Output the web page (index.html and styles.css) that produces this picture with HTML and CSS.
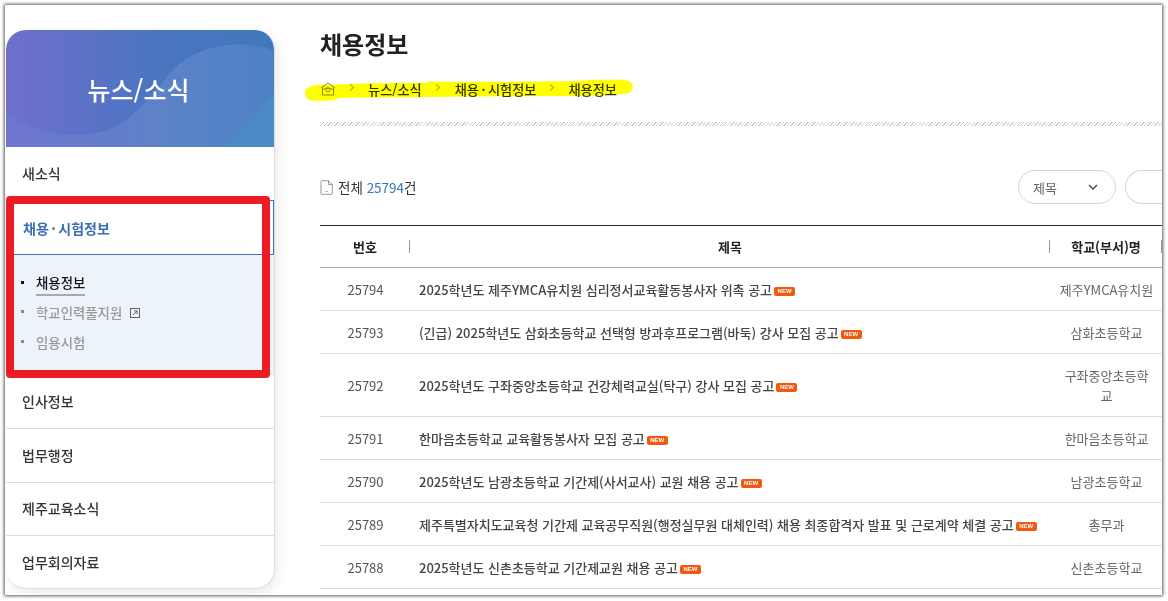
FILE: index.html
```html
<!DOCTYPE html>
<html lang="ko">
<head>
<meta charset="utf-8">
<title>채용정보</title>
<link rel="stylesheet" href="styles.css">
</head>
<body>
<div class="frame">
  <aside class="side">
    <div class="side-head">
      <svg class="wave" viewBox="0 0 268 117" preserveAspectRatio="none" aria-hidden="true">
        <defs>
          <linearGradient id="g1" x1="0" x2="1" y1="0" y2="0"><stop offset="0" stop-color="#6f6fcd"/><stop offset=".55" stop-color="#4b75c2"/><stop offset="1" stop-color="#4178bb"/></linearGradient>
          <linearGradient id="g2" x1="0" x2="1" y1="0" y2="0"><stop offset="0" stop-color="#6e75cd"/><stop offset=".55" stop-color="#5e82c8"/><stop offset="1" stop-color="#4c82c4"/></linearGradient>
        </defs>
        <rect width="268" height="117" fill="url(#g1)"/>
        <path d="M0 82C30 104 60 107 85 104C120 100 140 72 165 42C190 16 225 8 268 20V117H0Z" fill="url(#g2)"/>
        <path d="M215 117C235 105 255 82 268 62V117Z" fill="#4c8ac6"/>
      </svg>
      <h2 class="side-title">뉴스/소식</h2>
    </div>
    <nav>
      <a class="nav-item first">새소식</a>
      <a class="nav-item active">채용<span class="dot">·</span>시험정보</a>
      <ul class="sub">
        <li class="on"><span>채용정보</span></li>
        <li><span>학교인력풀지원</span>
          <svg class="ext" viewBox="0 0 11 11" aria-hidden="true"><rect x=".5" y=".5" width="10" height="10" fill="none" stroke="#555"/><path d="M3.2 7.8 7.6 3.4M4.4 3.2H7.8V6.6" fill="none" stroke="#555"/></svg>
        </li>
        <li><span>임용시험</span></li>
      </ul>
      <a class="nav-item line">인사정보</a>
      <a class="nav-item line">법무행정</a>
      <a class="nav-item line short">제주교육소식</a>
      <a class="nav-item">업무회의자료</a>
    </nav>
  </aside>

  <main class="main">
    <h1 class="page-title">채용정보</h1>
    <div class="crumbs">
      <svg class="home" viewBox="0 0 16 14" aria-hidden="true"><path d="M1 6 8 1l7 5M2.5 5.5V13h11V5.5" fill="none" stroke="#8c8c50"/><circle cx="8" cy="8" r="2" fill="none" stroke="#8c8c50"/><path d="M3 8c2-2.600 8-2.600 10 0" fill="none" stroke="#8c8c50"/></svg>
      <i class="sep"></i><span>뉴스/소식</span>
      <i class="sep wide"></i><span>채용<span class="dot">·</span>시험정보</span>
      <i class="sep"></i><span>채용정보</span>
    </div>
    <div class="hatch"></div>
    <div class="toolbar">
      <div class="count">
        <svg class="file" viewBox="0 0 13 15" aria-hidden="true"><path d="M1 1.500A.8.8 0 0 1 1.800.7H8.500L12.300 4.500V13.500A.8.8 0 0 1 11.500 14.300H1.800A.8.8 0 0 1 1 13.500Z" fill="#fff" stroke="#999"/><path d="M8.500.7V4.500H12.300" fill="none" stroke="#999"/><path d="M5 11.500h3" stroke="#bbb"/></svg>
        <span>전체 <b>25794</b>건</span>
      </div>
      <div class="select">제목
        <svg class="chev" viewBox="0 0 10 6" aria-hidden="true"><path d="M1 1l4 4 4-4" fill="none" stroke="#444" stroke-width="1.300"/></svg>
      </div>
      <div class="search"></div>
    </div>
    <table class="list">
      <colgroup><col class="c1"><col class="c2"><col class="c3"><col class="c4"></colgroup>
      <thead>
        <tr><th class="first">번호</th><th>제목</th><th>학교(부서)명</th><th></th></tr>
      </thead>
      <tbody>
        <tr><td class="num">25794</td><td class="ttl">2025학년도 제주YMCA유치원 심리정서교육활동봉사자 위촉 공고<em class="new">NEW</em></td><td class="org">제주YMCA유치원</td><td></td></tr>
        <tr><td class="num">25793</td><td class="ttl">(긴급) 2025학년도 삼화초등학교 선택형 방과후프로그램(바둑) 강사 모집 공고<em class="new">NEW</em></td><td class="org">삼화초등학교</td><td></td></tr>
        <tr><td class="num">25792</td><td class="ttl">2025학년도 구좌중앙초등학교 건강체력교실(탁구) 강사 모집 공고<em class="new">NEW</em></td><td class="org">구좌중앙초등학교</td><td></td></tr>
        <tr><td class="num">25791</td><td class="ttl">한마음초등학교 교육활동봉사자 모집 공고<em class="new">NEW</em></td><td class="org">한마음초등학교</td><td></td></tr>
        <tr><td class="num">25790</td><td class="ttl">2025학년도 남광초등학교 기간제(사서교사) 교원 채용 공고<em class="new">NEW</em></td><td class="org">남광초등학교</td><td></td></tr>
        <tr><td class="num">25789</td><td class="ttl">제주특별자치도교육청 기간제 교육공무직원(행정실무원 대체인력) 채용 최종합격자 발표 및 근로계약 체결 공고<em class="new">NEW</em></td><td class="org">총무과</td><td></td></tr>
        <tr><td class="num">25788</td><td class="ttl">2025학년도 신촌초등학교 기간제교원 채용 공고<em class="new">NEW</em></td><td class="org">신촌초등학교</td><td></td></tr>
      </tbody>
    </table>
  </main>

  <svg class="marker" viewBox="0 0 340 30" aria-hidden="true"><path d="M1 18C1 12 8 10 16 10L34 9.500C60 8 100 8 120 8L125 6.500C180 7 240 6.500 277 6L285 5C310 4.500 322 4.500 325 6C330 9 330 15 325 18C315 20 290 20.500 277 21C220 21 160 21.500 125 22L70 22.500 34 23C34 25 25 26 14 26C4 26 1 23 1 18Z" fill="#ffff00"/></svg>
  <div class="callout"></div>
</div>
</body>
</html>
```

FILE: styles.css
```css
* { box-sizing: border-box; }
html, body { margin: 0; padding: 0; background: #fff; }
body {
  width: 1168px;
  height: 601px;
  overflow: hidden;
  padding: 5px 6px 6px 5px;
  font-family: "Noto Sans CJK KR", "Noto Sans", sans-serif;
  color: #333;
}
.frame {
  position: relative;
  display: flex;
  align-items: flex-start;
  width: 1157px;
  height: 590px;
  overflow: hidden;
  background: #fff;
  box-shadow: 0 0 3px 1px #5a5a5a;
}

/* sidebar */
.side {
  flex: none;
  width: 269px;
  margin: 25px 0 0 1px;
  height: 559px;
  background: #fff;
  border: 1px solid #ddd;
  border-top: 0;
  border-left: 0;
  border-radius: 20px;
  overflow: hidden;
  box-shadow: 3px 4px 12px rgba(0, 0, 0, .08);
}
.side-head {
  position: relative;
  height: 117px;
  padding-right: 3px;
  display: flex;
  align-items: center;
  justify-content: center;
}
.wave { position: absolute; inset: 0; width: 100%; height: 100%; }
.side-title {
  position: relative;
  margin: 0;
  font-size: 25px;
  line-height: 30px;
  font-weight: 500;
  color: #fff;
}
.nav-item {
  display: flex;
  align-items: center;
  height: 54px;
  padding: 0 0 2px 16px;
  font-size: 14px;
  font-weight: 500;
  color: #333;
}
.nav-item.first { height: 53px; }
.nav-item.short { height: 53px; }
.nav-item.line { border-bottom: 1px solid #ddd; }
.nav-item.active {
  height: 55px;
  color: #3a6fb5;
  font-weight: 700;
  border: 1px solid #3a75bd;
  border-left: 0;
  padding: 0 0 0 17px;
}
.dot { padding: 0 2.500px; }
.sub {
  list-style: none;
  margin: 0;
  padding: 12px 0 0 15px;
  height: 120px;
  background: #edf3fb;
  border-bottom: 1px solid #ddd;
  font-size: 13.400px;
}
.sub li {
  position: relative;
  display: flex;
  align-items: center;
  height: 30px;
  padding-left: 15px;
  color: #999;
  font-weight: 500;
}
.sub li::before {
  content: "";
  position: absolute;
  left: 0;
  top: 13px;
  width: 3px;
  height: 3px;
  background: #888;
}
.sub li.on { color: #111; }
.sub li.on::before { background: #111; top: 14px; }
.sub li.on span {
  margin-top: 2px;
  line-height: 24px;
  border-bottom: 2px solid #aaa6b5;
}
.ext { width: 10px; height: 10px; margin-left: 8px; margin-top: 2px; }

/* main */
.main {
  flex: none;
  width: 860px;
  margin-left: 45px;
}
.page-title {
  margin: 0;
  padding-top: 22px;
  font-size: 24px;
  line-height: 34px;
  font-weight: 700;
  color: #222;
}
.crumbs {
  position: relative;
  z-index: 1;
  display: flex;
  align-items: center;
  height: 20px;
  margin-top: 18px;
  font-size: 13.200px;
  font-weight: 500;
  color: #333;
}
.home { width: 16px; height: 14px; }
.sep {
  width: 5px;
  height: 5px;
  margin: 0 15px 3px 12px;
  border-top: 1px solid #aaa;
  border-right: 1px solid #aaa;
  transform: rotate(45deg);
}
.sep.wide { margin-right: 16px; }
.hatch {
  height: 4px;
  margin-top: 23px;
  background: repeating-linear-gradient(135deg, #ccc 0 1px, #fff 1px 2.500px);
}
.toolbar {
  display: flex;
  align-items: center;
  height: 34px;
  margin-top: 44px;
}
.count {
  display: flex;
  align-items: center;
  flex: 1;
  font-size: 13.500px;
  color: #333;
}
.count b { font-weight: 400; color: #3a77b9; }
.file { width: 13px; height: 15px; margin-right: 5px; }
.select {
  flex: none;
  display: flex;
  align-items: center;
  justify-content: space-between;
  width: 98px;
  height: 34px;
  padding: 0 17px 0 14px;
  border: 1px solid #d5d5d5;
  border-radius: 17px;
  font-size: 13px;
  color: #666;
}
.chev { width: 10px; height: 6px; }
.search {
  flex: none;
  width: 55px;
  height: 34px;
  margin-left: 9px;
  border: 1px solid #d5d5d5;
  border-right: 0;
  border-radius: 17px 0 0 17px;
}
.list {
  width: 842px;
  margin-top: 21px;
  border-collapse: collapse;
  table-layout: fixed;
  border-top: 1px solid #2b2b45;
}
.c1 { width: 89px; }
.c2 { width: 640px; }
.c3 { width: 112px; }
.c4 { width: 1px; }
.list th {
  height: 42px;
  padding: 0 0 0 2px;
  font-size: 13px;
  font-weight: 700;
  color: #222;
  border-bottom: 1px solid #aaa;
  background: linear-gradient(#999, #999) left center / 1px 13px no-repeat;
}
.list th.first { background: none; padding-left: 1px; }
.list td {
  padding: 12px 9px 10px;
  font-size: 13px;
  line-height: 20px;
  border-bottom: 1px solid #ddd;
  vertical-align: middle;
}
.list td.num { text-align: center; color: #555; padding: 12px 0 10px 2px; }
.list td.ttl { font-weight: 500; color: #444; white-space: nowrap; letter-spacing: -.02px; padding-left: 10px; }
.list td.org { text-align: center; color: #666; padding-left: 10px; padding-right: 7px; }
.list td:last-child { padding: 0; }
.new {
  display: inline-block;
  width: 21px;
  height: 9px;
  margin-left: 2px;
  background: #f2590f;
  border-radius: 2px;
  color: #fff;
  font-family: "Liberation Sans", sans-serif;
  font-size: 6px;
  line-height: 9px;
  font-style: normal;
  font-weight: 700;
  text-align: center;
  letter-spacing: 0;
  vertical-align: 2px;
}

/* annotations drawn over the screenshot */
.marker {
  position: absolute;
  left: 299px;
  top: 70px;
  width: 340px;
  height: 30px;
  mix-blend-mode: multiply;
  z-index: 2;
}
.callout {
  position: absolute;
  left: 1px;
  top: 191px;
  width: 264px;
  height: 182px;
  border: 8px solid #ed1c24;
  border-radius: 4px;
  z-index: 3;
}
```
